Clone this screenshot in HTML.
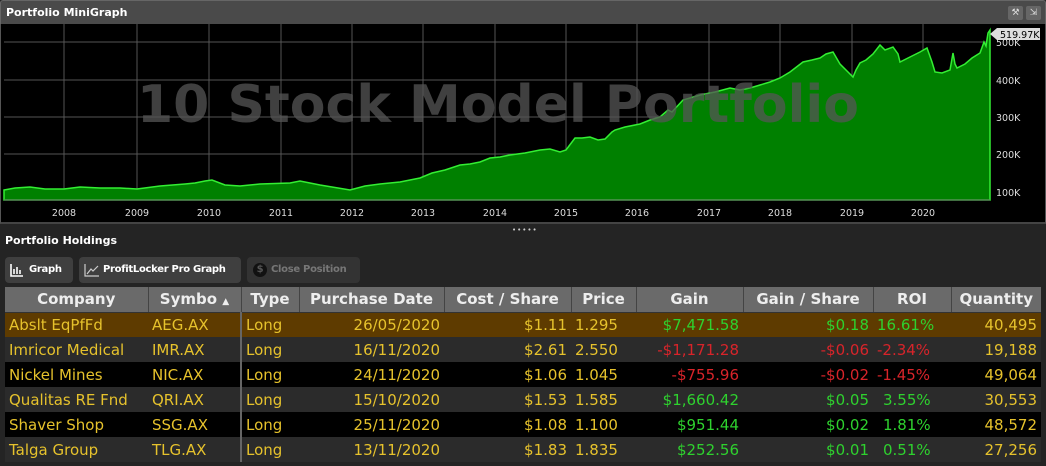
<!DOCTYPE html>
<html><head><style>
*{margin:0;padding:0;box-sizing:border-box}
body{width:1046px;height:466px;background:#242424;font-family:Tahoma,"DejaVu Sans",sans-serif;overflow:hidden;position:relative}
.tb{position:absolute;left:0;top:0;width:1046px;height:24px;background:#4a4a4a;border:1px solid #666;border-bottom:none;border-radius:3px 3px 0 0}
.tb span{position:absolute;left:5px;top:5px;color:#fff;font-weight:bold;font-size:11px}
.ib{position:absolute;top:5px;width:15px;height:14px;background:#666;border-radius:2px;color:#ddd;font-size:9px;text-align:center;line-height:14px}
.chart{position:absolute;left:0;top:24px;width:1046px;height:200px;background:#000;border-left:1px solid #555;border-right:1px solid #555;border-bottom:2px solid #444}
.h{position:absolute;left:5px;top:234px;color:#fff;font-weight:bold;font-size:11px}
.btn{position:absolute;top:257px;height:26px;background:#3f3f3f;border-radius:4px;color:#fff;font-weight:bold;font-size:10px;line-height:26px;padding-left:24px;white-space:nowrap;overflow:hidden;letter-spacing:-0.3px}
table{position:absolute;left:5px;top:287px;width:1036px;border-collapse:collapse;font-family:"DejaVu Sans",Verdana,sans-serif;font-size:15px}
th{background:#6a6a6a;color:#eee;font-weight:bold;height:25px;border-right:1px solid #444;border-bottom:1px solid #333;font-size:15px;text-align:center;white-space:nowrap}
td{height:25px;color:#e6c22c;padding:0 4px;white-space:nowrap}
tr.a td{background:#2b2b2b}tr.b td{background:#000}tr.s td{background:#5e3b00}
td.r{text-align:right}td.c3{border-left:2px solid #666}
.g{color:#2ed12e!important}.n{color:#d8242a!important}
</style></head><body>
<div class="tb"><span>Portfolio MiniGraph</span><div class="ib" style="left:1007px">&#9874;</div><div class="ib" style="left:1025px">&#8690;</div></div>
<div class="chart">
<svg width="1046" height="200" style="position:absolute;left:-1px;top:0">
<g stroke="#555" stroke-width="1">
<line x1="4" y1="18" x2="990" y2="18"/><line x1="4" y1="56" x2="990" y2="56"/><line x1="4" y1="93" x2="990" y2="93"/><line x1="4" y1="130" x2="990" y2="130"/><line x1="4" y1="168" x2="990" y2="168"/>
<line x1="64" y1="0" x2="64" y2="176"/><line x1="137" y1="0" x2="137" y2="176"/><line x1="209" y1="0" x2="209" y2="176"/><line x1="281" y1="0" x2="281" y2="176"/><line x1="352" y1="0" x2="352" y2="176"/><line x1="423" y1="0" x2="423" y2="176"/><line x1="495" y1="0" x2="495" y2="176"/><line x1="566" y1="0" x2="566" y2="176"/><line x1="637" y1="0" x2="637" y2="176"/><line x1="709" y1="0" x2="709" y2="176"/><line x1="780" y1="0" x2="780" y2="176"/><line x1="852" y1="0" x2="852" y2="176"/><line x1="923" y1="0" x2="923" y2="176"/>
</g>
<polygon fill="#008000" stroke="#33ee33" stroke-width="1.5" points="4,176 4,166 15,164 30,163 45,165 64,165 80,163 100,164 120,164 137,165 160,162 185,160 195,159 205,157 212,156 225,161 240,162 260,160 290,159 300,157 320,161 350,166 365,162 380,160 400,158 410,156 420,154 432,149 445,146 460,141 470,140 480,138 490,134 500,133 510,131 525,129 540,126 550,125 560,128 566,126 572,118 575,114 582,114 590,113 598,116 605,115 612,108 615,106 625,103 640,100 650,96 660,93 668,86 672,88 683,76 690,74 700,71 715,68 730,64 740,66 750,64 760,61 770,58 780,54 790,48 803,38 812,36 820,34 826,30 833,28 840,40 848,48 853,53 856,46 860,39 866,36 873,30 880,21 885,26 893,23 898,30 900,38 910,33 920,28 927,24 932,38 935,48 942,49 950,46 953,29 955,40 957,44 965,40 972,34 980,29 984,18 986,22 988,9 990,6 990,176"/>
<text x="137" y="98" font-family="Tahoma,'DejaVu Sans',sans-serif" font-weight="bold" font-size="52" fill="#555" fill-opacity="0.75" textLength="722" lengthAdjust="spacingAndGlyphs">10 Stock Model Portfolio</text>
<line x1="4" y1="176" x2="990" y2="176" stroke="#666"/>
<g font-family="Tahoma,'DejaVu Sans',sans-serif" font-size="9.5" fill="#ddd" text-anchor="middle">
<text x="64" y="192">2008</text><text x="137" y="192">2009</text><text x="209" y="192">2010</text><text x="281" y="192">2011</text><text x="352" y="192">2012</text><text x="423" y="192">2013</text><text x="495" y="192">2014</text><text x="566" y="192">2015</text><text x="637" y="192">2016</text><text x="709" y="192">2017</text><text x="780" y="192">2018</text><text x="852" y="192">2019</text><text x="923" y="192">2020</text>
</g>
<g font-family="Tahoma,'DejaVu Sans',sans-serif" font-size="9.5" fill="#ddd">
<text x="996" y="172">100K</text><text x="996" y="134">200K</text><text x="996" y="97">300K</text><text x="996" y="60">400K</text><text x="996" y="22">500K</text>
</g>
<polygon points="990,10 997,4 1040,4 1040,16 997,16" fill="#ddd"/>
<text x="1000" y="14" font-family="Tahoma,'DejaVu Sans',sans-serif" font-size="9.5" fill="#000">519.97K</text>
</svg></div>
<div style="position:absolute;left:512px;top:226px;color:#ccc;font-size:7px;letter-spacing:1px">•••••</div>
<div class="h">Portfolio Holdings</div>
<div class="btn" style="left:5px;width:68px"><svg style="position:absolute;left:5px;top:6px" width="14" height="14"><path d="M1 1V13H13M4 11V6M7 11V4M10 11V7" stroke="#fff" stroke-width="1.6" fill="none"/></svg>Graph</div>
<div class="btn" style="left:79px;width:162px"><svg style="position:absolute;left:5px;top:6px" width="16" height="14"><path d="M1 1V13H15M3 11L7 6L9 8L14 3" stroke="#ccc" stroke-width="1.2" fill="none"/></svg>ProfitLocker Pro Graph</div>
<div class="btn" style="left:247px;width:113px;color:#777;background:#333"><span style="position:absolute;left:6px;top:6px;width:14px;height:14px;border-radius:7px;background:#111;color:#555;font-size:10px;line-height:14px;text-align:center">$</span>Close Position</div>
<table>
<tr><th style="width:143px">Company</th><th style="width:93px">Symbo <span style="font-size:9px">▲</span></th><th style="width:58px">Type</th><th style="width:145px">Purchase Date</th><th style="width:127px">Cost / Share</th><th style="width:65px">Price</th><th style="width:107px">Gain</th><th style="width:130px">Gain / Share</th><th style="width:78px">ROI</th><th style="border-right:none">Quantity</th></tr>
<tr class="s"><td>Abslt EqPfFd</td><td>AEG.AX</td><td class="c3">Long</td><td class="r">26/05/2020</td><td class="r">$1.11</td><td>1.295</td><td class="r g">$7,471.58</td><td class="r g">$0.18</td><td class="g">16.61%</td><td class="r">40,495</td></tr>
<tr class="a"><td>Imricor Medical</td><td>IMR.AX</td><td class="c3">Long</td><td class="r">16/11/2020</td><td class="r">$2.61</td><td>2.550</td><td class="r n">-$1,171.28</td><td class="r n">-$0.06</td><td class="n">-2.34%</td><td class="r">19,188</td></tr>
<tr class="b"><td>Nickel Mines</td><td>NIC.AX</td><td class="c3">Long</td><td class="r">24/11/2020</td><td class="r">$1.06</td><td>1.045</td><td class="r n">-$755.96</td><td class="r n">-$0.02</td><td class="n">-1.45%</td><td class="r">49,064</td></tr>
<tr class="a"><td>Qualitas RE Fnd</td><td>QRI.AX</td><td class="c3">Long</td><td class="r">15/10/2020</td><td class="r">$1.53</td><td>1.585</td><td class="r g">$1,660.42</td><td class="r g">$0.05</td><td class="g" style="padding-left:10px">3.55%</td><td class="r">30,553</td></tr>
<tr class="b"><td>Shaver Shop</td><td>SSG.AX</td><td class="c3">Long</td><td class="r">25/11/2020</td><td class="r">$1.08</td><td>1.100</td><td class="r g">$951.44</td><td class="r g">$0.02</td><td class="g" style="padding-left:10px">1.81%</td><td class="r">48,572</td></tr>
<tr class="a"><td>Talga Group</td><td>TLG.AX</td><td class="c3">Long</td><td class="r">13/11/2020</td><td class="r">$1.83</td><td>1.835</td><td class="r g">$252.56</td><td class="r g">$0.01</td><td class="g" style="padding-left:10px">0.51%</td><td class="r">27,256</td></tr>
</table>
</body></html>
